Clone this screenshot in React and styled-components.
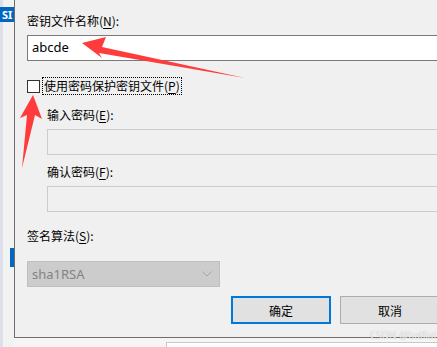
import React from "react"
import styled, { createGlobalStyle } from "styled-components"

const GlobalStyle = createGlobalStyle`
  html, body {
    margin: 0;
    padding: 0;
    background: #f0f0f0;
  }
  body {
    font-family: "Noto Sans", "Noto Sans CJK SC", sans-serif;
    font-size: 12px;
    color: #000;
  }
`

const Screen = styled.div`
  position: relative;
  width: 437px;
  height: 347px;
  overflow: hidden;
  display: grid;
  grid-template-columns: 14px 1fr;
  background: #f3f3f3;
`

const SideStrip = styled.div`
  display: flex;
  flex-direction: column;
  background: #f2f2f2;
  border-left: 3px solid #dde0ea;
`

const SiTab = styled.div`
  margin-top: 7px;
  margin-left: -3px;
  height: 15px;
  width: 14px;
  background: #0067c0;
  color: #fff;
  font-family: "Noto Sans", sans-serif;
  font-weight: 700;
  font-size: 11px;
  line-height: 15px;
  padding-left: 2px;
  box-sizing: border-box;
  overflow: hidden;
  white-space: nowrap;
`

const Marker = styled.div`
  margin-top: 226px;
  align-self: flex-end;
  width: 4px;
  height: 19px;
  background: #0067c0;
`

const Main = styled.div`
  display: flex;
  flex-direction: column;
  min-width: 0;
`

const Dialog = styled.div`
  width: 438px;
  height: 338px;
  box-sizing: border-box;
  flex-shrink: 0;
  background: #f0f0f0;
  border-left: 1px solid #6d6d6d;
  border-bottom: 1px solid #6d6d6d;
  padding: 13px 12px 0 12px;
  display: flex;
  flex-direction: column;
`

const Label = styled.div`
  font-family: "Noto Sans CJK SC", sans-serif;
  font-size: 12px;
  line-height: 16px;
  height: 16px;
  margin-top: ${p => p.$top || 0}px;
  margin-left: ${p => (p.$indent ? 20 : 0)}px;
  white-space: nowrap;
  u {
    text-decoration-thickness: 1px;
    text-underline-offset: 2px;
  }
`

const TextBox = styled.div`
  height: 26px;
  box-sizing: border-box;
  margin-top: ${p => p.$top || 0}px;
  margin-left: ${p => (p.$indent ? 20 : 0)}px;
  border: 1px solid ${p => (p.$disabled ? "#cccccc" : "#7a7a7a")};
  background: ${p => (p.$disabled ? "#f0f0f0" : "#ffffff")};
  padding-left: 4px;
  font-family: "Noto Sans", sans-serif;
  font-size: 13px;
  line-height: 23px;
`

const CheckRow = styled.div`
  margin-top: 16px;
  height: 18px;
  display: flex;
  align-items: center;
  gap: 2px;
`

const CheckBox = styled.div`
  width: 13px;
  height: 13px;
  box-sizing: border-box;
  border: 1px solid #333333;
  background: #ffffff;
`

const FocusLabel = styled.div`
  height: 18px;
  box-sizing: border-box;
  border: 1px dotted #000;
  padding: 0 1px;
  font-family: "Noto Sans CJK SC", sans-serif;
  font-size: 12px;
  line-height: 16px;
  white-space: nowrap;
  u {
    text-decoration-thickness: 1px;
    text-underline-offset: 2px;
  }
`

const Select = styled.div`
  margin-top: 17px;
  width: 193px;
  height: 26px;
  box-sizing: border-box;
  border: 1px solid #bfbfbf;
  background: #cccccc;
  color: #838383;
  display: flex;
  align-items: center;
  justify-content: space-between;
  padding: 0 7px 0 4px;
  font-family: "Noto Sans", sans-serif;
  font-size: 13px;
`

const ButtonRow = styled.div`
  margin-top: 9px;
  display: flex;
  justify-content: flex-end;
  gap: 9px;
`

const Button = styled.div`
  width: 100px;
  height: 28px;
  box-sizing: border-box;
  background: #e1e1e1;
  border: ${p => (p.$primary ? "2px solid #0078d7" : "1px solid #adadad")};
  display: flex;
  align-items: center;
  justify-content: center;
  font-family: "Noto Sans CJK SC", sans-serif;
  font-size: 12px;
`

const BottomStrip = styled.div`
  flex: 1;
  background: #f5f5f5;
  padding: 4px 0 0 152px;
`

const BehindBox = styled.div`
  height: 10px;
  background: #ffffff;
  border-top: 1px solid #c8c8c8;
  border-left: 1px solid #c8c8c8;
`

const Watermark = styled.div`
  position: absolute;
  left: 370px;
  top: 328px;
  font-family: "Noto Sans", sans-serif;
  font-size: 10px;
  color: rgba(255, 255, 255, 0.85);
  text-shadow: 0 0 1px rgba(120, 120, 120, 0.6);
  white-space: nowrap;
`

const Overlay = styled.svg`
  position: absolute;
  left: 0;
  top: 0;
  pointer-events: none;
`

const Chevron = () => (
  <svg width="10" height="6" viewBox="0 0 10 6">
    <path d="M0.5 0.5 L5 5 L9.5 0.5" fill="none" stroke="#a6a6a6" strokeWidth="1" />
  </svg>
)

export default function App() {
  return (
    <>
      <GlobalStyle />
      <Screen>
        <SideStrip>
          <SiTab>SI</SiTab>
          <Marker />
        </SideStrip>
        <Main>
          <Dialog>
            <Label>
              密钥文件名称(<u>N</u>):
            </Label>
            <TextBox $top={6}>abcde</TextBox>
            <CheckRow>
              <CheckBox />
              <FocusLabel>
                使用密码保护密钥文件(<u>P</u>)
              </FocusLabel>
            </CheckRow>
            <Label $indent $top={12}>
              输入密码(<u>E</u>):
            </Label>
            <TextBox $indent $disabled $top={6} />
            <Label $indent $top={9}>
              确认密码(<u>F</u>):
            </Label>
            <TextBox $indent $disabled $top={6} />
            <Label $top={16}>
              签名算法(<u>S</u>):
            </Label>
            <Select>
              <span>sha1RSA</span>
              <Chevron />
            </Select>
            <ButtonRow>
              <Button $primary>确定</Button>
              <Button>取消</Button>
            </ButtonRow>
          </Dialog>
          <BottomStrip>
            <BehindBox />
          </BottomStrip>
        </Main>
        <Watermark>CSDN @baillat</Watermark>
        <Overlay width="437" height="347" viewBox="0 0 437 347">
          <polygon
            points="82,43 106,37 102,47 245,78 99,53 102,58"
            fill="#ff3b3b"
          />
          <polygon
            points="33,95 42,119 35,115 22,168 27,115 20,118"
            fill="#ff3b3b"
          />
        </Overlay>
      </Screen>
    </>
  )
}
